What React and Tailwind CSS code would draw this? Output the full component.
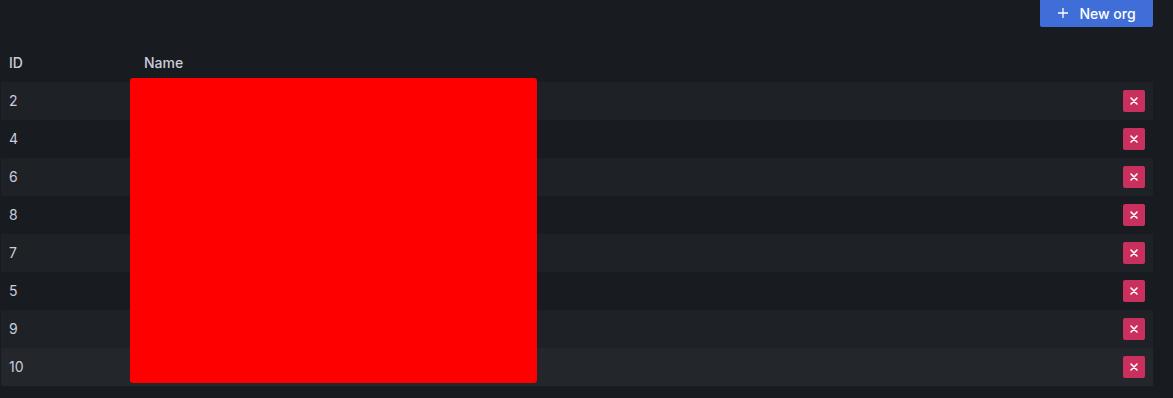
import React from "react";

const rows = ["2", "4", "6", "8", "7", "5", "9", "10"];

function XIcon() {
  return (
    <svg width="10" height="10" viewBox="0 0 10 10" fill="none">
      <path d="M2 2L8 8M8 2L2 8" stroke="white" strokeWidth="1.6" strokeLinecap="round" />
    </svg>
  );
}

export default function App() {
  return (
    <div
      className="w-[1173px] h-[398px] bg-[#181b1f] text-[#ccccdc] text-[14px] relative overflow-hidden"
      style={{ fontFamily: "Inter, 'Noto Sans', sans-serif" }}
    >
      <div className="flex justify-end pr-[20px]">
        <button className="h-[27px] w-[113px] bg-[#3f6ed8] rounded-b-[2px] flex items-center justify-center gap-[10px] text-white font-medium text-[14px] pb-[1px]">
          <svg width="12" height="12" viewBox="0 0 12 12" fill="none">
            <path d="M6 1V11M1 6H11" stroke="white" strokeWidth="1.3" />
          </svg>
          <span>New org</span>
        </button>
      </div>
      <div className="mt-[18px] ml-[1px] w-[1152px]">
        <div className="flex h-[37px] items-center font-medium text-[#ccccdc] pb-[2px]">
          <div className="w-[135px] pl-[8px]">ID</div>
          <div className="pl-[8px]">Name</div>
        </div>
        {rows.map((id, i) => (
          <div
            key={id}
            className={
              "flex h-[38px] items-center " +
              (i === 7 ? "bg-[#23262b]" : i % 2 === 0 ? "bg-[#1e2126]" : "bg-[#181b1f]")
            }
          >
            <div className="w-[135px] pl-[8px] pb-[2px]">{id}</div>
            <div className="flex-1" />
            <div className="pr-[8px]">
              <button className="w-[22px] h-[22px] rounded-[2px] bg-[#c9305e] flex items-center justify-center">
                <XIcon />
              </button>
            </div>
          </div>
        ))}
      </div>
      <div className="absolute left-[130px] top-[78px] w-[407px] h-[305px] bg-[#ff0000] rounded-[3px]" />
    </div>
  );
}
